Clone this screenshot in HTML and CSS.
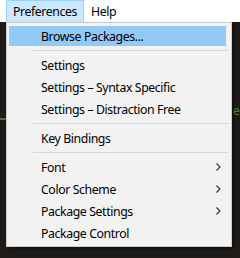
FILE: index.html
```html
<!DOCTYPE html>
<html lang="en">
<head>
    <meta charset="UTF-8">
    <title>Preferences menu</title>
    <link rel="stylesheet" href="styles.css">
</head>
<body>

    <!-- Editor behind the menu -->
    <div class="editor">
        <span class="code-left"></span>
        <span class="code-right">e</span>
    </div>

    <!-- Menu bar -->
    <div class="menubar">
        <div class="menubar-item open">Preferences</div>
        <div class="menubar-item">Help</div>
    </div>

    <!-- Dropdown -->
    <div class="menu">
        <div class="menu-item active">Browse Packages...</div>
        <div class="separator"></div>
        <div class="menu-item">Settings</div>
        <div class="menu-item">Settings – Syntax Specific</div>
        <div class="menu-item">Settings – Distraction Free</div>
        <div class="separator"></div>
        <div class="menu-item">Key Bindings</div>
        <div class="separator"></div>
        <div class="menu-item">Font
            <svg class="arrow" width="5" height="8" viewBox="0 0 5 8"><polyline points="0.5,0.5 4,4 0.5,7.5" fill="none" stroke="#333" stroke-width="1.1"/></svg>
        </div>
        <div class="menu-item">Color Scheme
            <svg class="arrow" width="5" height="8" viewBox="0 0 5 8"><polyline points="0.5,0.5 4,4 0.5,7.5" fill="none" stroke="#333" stroke-width="1.1"/></svg>
        </div>
        <div class="menu-item">Package Settings
            <svg class="arrow" width="5" height="8" viewBox="0 0 5 8"><polyline points="0.5,0.5 4,4 0.5,7.5" fill="none" stroke="#333" stroke-width="1.1"/></svg>
        </div>
        <div class="menu-item">Package Control</div>
    </div>

</body>
</html>
```

FILE: styles.css
```css
body, html {
    margin: 0;
    padding: 0;
    width: 240px;
    height: 258px;
    overflow: hidden;
}

body {
    background-color: #1f1b18;
    font-family: "Noto Sans", "Open Sans", sans-serif;
    font-size: 12.3px;
    letter-spacing: -0.4px;
    color: #000;
    position: relative;
}

/* editor text peeking out around the menu */
.code-left {
    position: absolute;
    left: 0;
    top: 118px;
    width: 6px;
    height: 2px;
    background-color: #3f7a2a;
}

.code-right {
    position: absolute;
    left: 233px;
    top: 102px;
    color: #4d8c30;
    font-size: 12px;
}

.menubar {
    display: flex;
    height: 22px;
    padding-left: 6px;
    background-color: #fff;
}

.menubar-item {
    padding: 0 6px;
    line-height: 21px;
    border: 1px solid transparent;
    border-bottom: none;
}

.menubar-item.open {
    background-color: #cce8ff;
    border-color: #99d1ff;
}

.menu {
    position: relative;
    display: flex;
    flex-direction: column;
    width: 219px;
    margin-left: 6px;
    padding: 2px 3px 2px 2px;
    background-color: #f2f2f2;
    border: 1px solid #cccccc;
    box-shadow: 2px 2px 3px rgba(0, 0, 0, 0.45);
}

.menu-item {
    display: flex;
    align-items: center;
    justify-content: space-between;
    height: 20px;
    margin: 1px 2px 1px 0;
    padding: 0 5px 0 32px;
    white-space: nowrap;
}

.menu-item.active {
    background-color: #91c9f7;
}

.arrow {
    display: block;
}

.separator {
    height: 1px;
    margin: 3px 0 3px 24px;
    background-color: #d7d7d7;
}
```
